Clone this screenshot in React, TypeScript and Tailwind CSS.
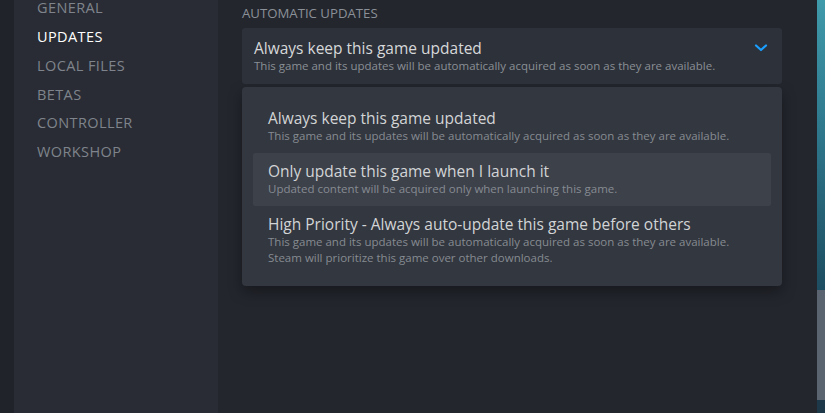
import React from "react";

const navItems = ["GENERAL", "UPDATES", "LOCAL FILES", "BETAS", "CONTROLLER", "WORKSHOP"];

const options = [
  {
    title: "Always keep this game updated",
    lines: ["This game and its updates will be automatically acquired as soon as they are available."],
  },
  {
    title: "Only update this game when I launch it",
    lines: ["Updated content will be acquired only when launching this game."],
  },
  {
    title: "High Priority - Always auto-update this game before others",
    lines: [
      "This game and its updates will be automatically acquired as soon as they are available.",
      "Steam will prioritize this game over other downloads.",
    ],
  },
];

export default function App() {
  return (
    <div
      className="flex w-[825px] h-[413px] overflow-hidden bg-[#23262d]"
      style={{ fontFamily: '"Open Sans", "Noto Sans", sans-serif' }}
    >
      <div className="w-[14px] shrink-0 bg-[#20232a]" />

      <nav className="w-[204px] shrink-0 bg-[#292c34] pl-[23px]">
        <ul className="-mt-[6px] flex flex-col">
          {navItems.map((item) => (
            <li
              key={item}
              className={`h-[28.7px] flex items-center text-[14.5px] tracking-[0.4px] ${
                item === "UPDATES" ? "text-white" : "text-[#7f848c]"
              }`}
            >
              {item}
            </li>
          ))}
        </ul>
      </nav>

      <main className="flex-1 pl-[24px] pr-[35px]">
        <div className="h-[29px] flex items-center text-[13.2px] text-[#8b9098] -mt-[1px]">
          AUTOMATIC UPDATES
        </div>

        <div className="relative h-[56px] rounded-[3px] bg-[#2d3139] pl-[12px] pt-[10px]">
          <div className="text-[15.5px] leading-[20px] text-[#d6d8da]">Always keep this game updated</div>
          <div className="text-[11.5px] leading-[16px] text-[#8a8f96]">
            This game and its updates will be automatically acquired as soon as they are available.
          </div>
          <svg
            className="absolute right-[14px] top-[15px]"
            width="14"
            height="10"
            viewBox="0 0 14 10"
            fill="none"
          >
            <path d="M2 2.5 L7 7 L12 2.5" stroke="#1a9fff" strokeWidth="2.2" strokeLinecap="round" strokeLinejoin="round" />
          </svg>
        </div>

        <div className="mt-[3px] rounded-[4px] bg-[#33373f] shadow-[0_6px_14px_rgba(0,0,0,0.35)] px-[11px] pt-[13px] pb-[11px] flex flex-col">
          {options.map((opt, i) => (
            <div
              key={opt.title}
              className={`px-[15px] pt-[9px] pb-[9px] rounded-[2px] ${i === 1 ? "bg-[#3d414a]" : ""}`}
            >
              <div className="text-[15.5px] leading-[19px] text-[#d2d4d6]">{opt.title}</div>
              {opt.lines.map((l) => (
                <div key={l} className="text-[11.5px] leading-[16px] text-[#868b92]">
                  {l}
                </div>
              ))}
            </div>
          ))}
        </div>
      </main>

      <div className="w-[8px] shrink-0 flex flex-col">
        <div className="h-[290px] bg-gradient-to-b from-[#3f9aaa] via-[#2d7489] to-[#1d4d60]" />
        <div className="h-[110px] bg-[#5a6470]" />
        <div className="flex-1 bg-[#1d3848]" />
      </div>
    </div>
  );
}
